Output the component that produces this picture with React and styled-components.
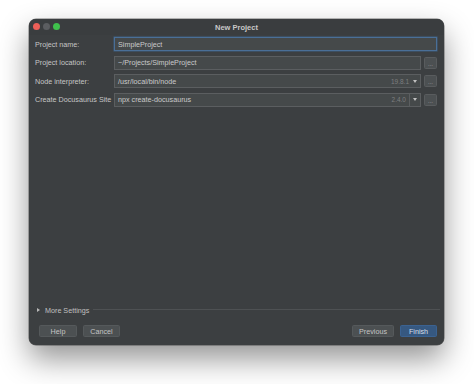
import React from "react";
import styled, { createGlobalStyle } from "styled-components";

const Global = createGlobalStyle`
  html, body { margin: 0; padding: 0; background: #ffffff; }
  body { font-family: "Liberation Sans", Arial, sans-serif; }
`;

const Page = styled.div`
  width: 474px;
  height: 384px;
  padding: 19px 0 0 29px;
  box-sizing: border-box;
`;

const Window = styled.div`
  width: 415px;
  height: 326px;
  background: #3c3f41;
  border-radius: 7px;
  box-shadow: 0 14px 30px rgba(0, 0, 0, 0.42), 0 0 0 0.5px rgba(0, 0, 0, 0.5);
  display: flex;
  flex-direction: column;
  box-sizing: border-box;
  overflow: hidden;
`;

const TitleBar = styled.div`
  height: 16px;
  position: relative;
  display: flex;
  align-items: center;
  justify-content: center;
  background: #3a3d3f;
`;

const Lights = styled.div`
  position: absolute;
  left: 4px;
  top: 4px;
  display: flex;
  gap: 3px;
`;

const Light = styled.span`
  width: 7px;
  height: 7px;
  border-radius: 50%;
  background: ${(p) => p.$c};
`;

const Title = styled.div`
  font-size: 7.5px;
  font-weight: bold;
  color: #c8c8c8;
  margin-top: 1px;
`;

const Form = styled.div`
  display: flex;
  flex-direction: column;
  gap: 4.5px;
  padding: 2px 7px 0 6px;
`;

const Row = styled.div`
  display: grid;
  grid-template-columns: ${(p) => (p.$browse ? "79px 1fr 13px" : "79px 1fr")};
  align-items: center;
  height: 14px;
`;

const Label = styled.div`
  font-size: 7.2px;
  color: #c6c6c6;
  white-space: nowrap;
`;

const Field = styled.div`
  height: 14px;
  box-sizing: border-box;
  background: #45494a;
  border: 1px solid ${(p) => (p.$focus ? "#4a6f97" : "#5b5e60")};
  box-shadow: ${(p) => (p.$focus ? "0 0 0 0.5px #3d5f80" : "none")};
  display: flex;
  align-items: center;
  padding-left: 3px;
  font-size: 7.2px;
  color: #cacaca;
  margin-right: ${(p) => (p.$short ? "3px" : "0")};
`;

const FieldText = styled.span`
  flex: 1;
`;

const Version = styled.span`
  color: #7d7f80;
  font-size: 6.5px;
  margin-right: ${(p) => (p.$divided ? "3px" : "1px")};
`;

const Arrow = styled.span`
  width: 10px;
  height: 12px;
  display: flex;
  align-items: center;
  justify-content: center;
  border-left: ${(p) => (p.$divided ? "1px solid #5b5e60" : "none")};
  &::after {
    content: "";
    border-left: 2.5px solid transparent;
    border-right: 2.5px solid transparent;
    border-top: 3px solid #c0c0c0;
  }
`;

const Browse = styled.div`
  width: 13px;
  height: 12px;
  box-sizing: border-box;
  background: #4c5052;
  border: 1px solid #595c5e;
  border-radius: 1.5px;
  display: flex;
  align-items: flex-end;
  justify-content: center;
  font-size: 6px;
  color: #a9a9a9;
  line-height: 8px;
`;

const Spacer = styled.div`
  flex: 1;
`;

const More = styled.div`
  display: flex;
  align-items: center;
  padding: 0 4px 0 8px;
  height: 10px;
  gap: 4px;
`;

const Tri = styled.span`
  width: 0;
  height: 0;
  border-top: 2.5px solid transparent;
  border-bottom: 2.5px solid transparent;
  border-left: 3px solid #b8b8b8;
  margin-right: 1px;
`;

const MoreText = styled.span`
  font-size: 7.2px;
  color: #c0c0c0;
  white-space: nowrap;
`;

const Line = styled.div`
  flex: 1;
  height: 1px;
  background: #4e5153;
  margin-top: -1px;
`;

const Footer = styled.div`
  display: flex;
  align-items: center;
  gap: 6px;
  padding: 10px 7px 8px 10px;
`;

const Btn = styled.div`
  width: ${(p) => p.$w}px;
  height: 12px;
  box-sizing: border-box;
  border-radius: 1.5px;
  background: ${(p) => (p.$primary ? "#365880" : "#4c5052")};
  border: 1px solid ${(p) => (p.$primary ? "#3b6291" : "#55595b")};
  display: flex;
  align-items: center;
  justify-content: center;
  font-size: 7.2px;
  color: ${(p) => (p.$primary ? "#d6dee8" : "#c4c4c4")};
  margin-left: ${(p) => (p.$push ? "auto" : "0")};
`;

export default function App() {
  return (
    <>
      <Global />
      <Page>
        <Window>
          <TitleBar>
            <Lights>
              <Light $c="#ec5f58" />
              <Light $c="#5b5d60" />
              <Light $c="#3fc04c" />
            </Lights>
            <Title>New Project</Title>
          </TitleBar>
          <Form>
            <Row>
              <Label>Project name:</Label>
              <Field $focus>
                <FieldText>SimpleProject</FieldText>
              </Field>
            </Row>
            <Row $browse>
              <Label>Project location:</Label>
              <Field $short>
                <FieldText>~/Projects/SimpleProject</FieldText>
              </Field>
              <Browse>...</Browse>
            </Row>
            <Row $browse>
              <Label>Node interpreter:</Label>
              <Field $short>
                <FieldText>/usr/local/bin/node</FieldText>
                <Version>19.8.1</Version>
                <Arrow />
              </Field>
              <Browse>...</Browse>
            </Row>
            <Row $browse>
              <Label>Create Docusaurus Site</Label>
              <Field $short>
                <FieldText>npx create-docusaurus</FieldText>
                <Version $divided>2.4.0</Version>
                <Arrow $divided />
              </Field>
              <Browse>...</Browse>
            </Row>
          </Form>
          <Spacer />
          <More>
            <Tri />
            <MoreText>More Settings</MoreText>
            <Line />
          </More>
          <Footer>
            <Btn $w={38}>Help</Btn>
            <Btn $w={37}>Cancel</Btn>
            <Btn $w={42} $push>Previous</Btn>
            <Btn $w={37} $primary>Finish</Btn>
          </Footer>
        </Window>
      </Page>
    </>
  );
}
